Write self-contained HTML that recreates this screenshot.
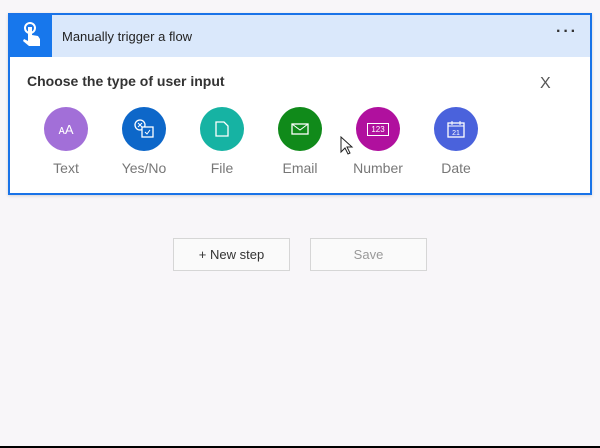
<!DOCTYPE html>
<html><head><style>
body{margin:0;width:600px;height:448px;background:#f8f6f9;font-family:"Liberation Sans",sans-serif;position:relative;overflow:hidden}
.card{position:absolute;left:8px;top:13px;width:580px;height:178px;border:2px solid #1a73e8;background:#fff;box-shadow:0 1px 3px rgba(0,0,0,.15)}
.hdr{position:absolute;left:0;top:0;right:0;height:42px;background:#dae8fb}
.ic{position:absolute;left:0;top:0;width:42px;height:42px;background:#1777ec}
.t{position:absolute;left:52px;top:14px;font-size:13px;color:#222}
.dots{position:absolute;right:12px;top:8px;font-size:16px;letter-spacing:2px;color:#333;font-weight:bold}
.h{position:absolute;left:17px;top:58px;font-size:14px;font-weight:bold;color:#333}
.x{position:absolute;left:530px;top:60px;font-size:16px;color:#555}
.it{position:absolute;top:92px;width:80px;text-align:center;font-size:14px;color:#777}
.c{width:44px;height:44px;border-radius:50%;margin:0 auto 9px;display:flex;align-items:center;justify-content:center}
.b{position:absolute;top:238px;width:115px;height:31px;border:1px solid #d6d6d6;background:#fafafa;font-size:13px;text-align:center;line-height:31px}
.line{position:absolute;left:0;bottom:0;width:600px;height:2px;background:#000}
</style></head><body>
<div class="card">
<div class="hdr"><div class="ic"><svg width="42" height="42" viewBox="0 0 42 42"><circle cx="20" cy="13" r="5" fill="none" stroke="#fff" stroke-width="2"/><path d="M18 12h4v8l6 1 2 3v7H19l-6-5 1-2 4 2z" fill="#fff"/></svg></div>
<div class="t">Manually trigger a flow</div><div class="dots">···</div></div>
<div class="h">Choose the type of user input</div>
<div class="x">X</div>
<div class="it" style="left:16px"><div class="c" style="background:#a26fd8"><span style="color:#fff;font-size:13px">ᴀA</span></div>Text</div>
<div class="it" style="left:94px"><div class="c" style="background:#0d67c9"><svg width="24" height="24"><circle cx="8" cy="8" r="5" fill="none" stroke="#fff" stroke-width="1.3"/><path d="M6 6l4 4M10 6l-4 4" stroke="#fff"/><rect x="10" y="10" width="11" height="10" fill="#0d67c9" stroke="#fff" stroke-width="1.3"/><path d="M13 15l2 2 3-4" stroke="#fff" fill="none"/></svg></div>Yes/No</div>
<div class="it" style="left:172px"><div class="c" style="background:#16b3a3"><svg width="14" height="16"><path d="M1 1h8l4 4v10H1z" fill="none" stroke="#fff" stroke-width="1.3"/></svg></div>File</div>
<div class="it" style="left:250px"><div class="c" style="background:#108a1a"><svg width="18" height="12"><rect x="1" y="1" width="16" height="10" fill="none" stroke="#fff" stroke-width="1.3"/><path d="M1 1l8 6 8-6" stroke="#fff" fill="none"/></svg></div>Email</div>
<div class="it" style="left:328px"><div class="c" style="background:#b0109e"><span style="color:#fff;font-size:8px;border:1.3px solid #fff;padding:1px 3px">123</span></div>Number</div>
<div class="it" style="left:406px"><div class="c" style="background:#4a62dc"><svg width="18" height="18"><rect x="1" y="3" width="16" height="14" fill="none" stroke="#fff" stroke-width="1.3"/><path d="M1 6h16M5 1v4M13 1v4" stroke="#fff"/><text x="9" y="15" font-size="7" fill="#fff" text-anchor="middle" font-family="Liberation Sans">21</text></svg></div>Date</div>
</div>
<svg style="position:absolute;left:340px;top:136px" width="14" height="20"><path d="M1 1v15l4-4 3 6 2-1-3-6h5z" fill="#fff" stroke="#222"/></svg>
<div class="b" style="left:173px;color:#333">+ New step</div>
<div class="b" style="left:310px;color:#999">Save</div>
<div class="line"></div>
</body></html>
